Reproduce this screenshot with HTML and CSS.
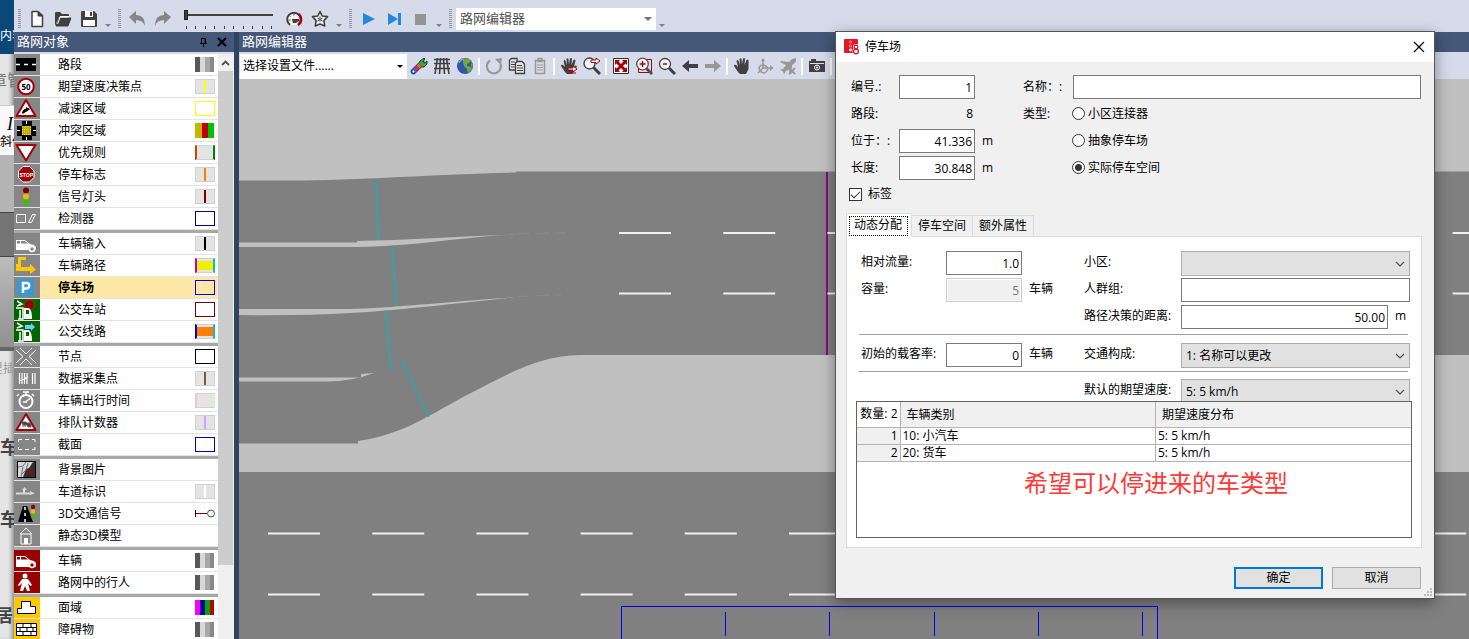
FILE: index.html
```html
<!DOCTYPE html>
<html lang="zh-CN">
<head>
  <meta charset="UTF-8">
  <title>路网编辑器</title>
  <link rel="stylesheet" href="styles.css">
</head>
<body>
  <div class="desktop">
    <aside class="behind" aria-hidden="true">
      <div class="behind-blue">内容</div>
      <div class="behind-head">章管</div>
      <div class="behind-tool"><i>I</i><span>斜体</span></div>
      <div class="behind-grey"></div>
      <div class="behind-dark"></div>
      <div class="behind-fade"></div>
      <div class="behind-hint">里插</div>
      <div class="behind-page"><b>车</b><b>车</b><b>居</b></div>
    </aside>

    <div class="app">
      <header class="toolbar">
        <span class="grip"></span>
        <button class="tool" aria-label="新建"><svg width="18" height="18" viewBox="0 0 18 18"><path d="M4 1.500h6l4.500 4v11H4z" fill="#fff" stroke="#404040" stroke-width="1.500" stroke-linejoin="round"/><path d="M10 1.500v4.500h4.500" fill="#404040" stroke="#404040"/></svg></button>
        <button class="tool" aria-label="打开"><svg width="18" height="18" viewBox="0 0 18 18"><path d="M1 16V3q0-1 1-1h4l2 2h6q1 0 1 1v2H5z" fill="#404040"/><path d="M5 8h12l-3 8H2z" fill="#404040" stroke="#404040"/><path d="M3 14L6 6h9v1.500H6.500L4 14z" fill="#fff"/></svg></button>
        <button class="tool" aria-label="保存"><svg width="18" height="18" viewBox="0 0 18 18"><path d="M2 1h12l3 3v12q0 1-1 1H2q-1 0-1-1V2q0-1 1-1z" fill="#404040"/><path d="M5 1h8v6H5zM3 10h12v6H3z" fill="#fff"/><path d="M10 2h2v4h-2z" fill="#404040"/></svg></button>
        <span class="more"></span>
        <span class="grip"></span>
        <button class="tool" aria-label="撤销"><svg width="18" height="18" viewBox="0 0 18 18"><path d="M1 7l7-6v4q9 0 9 11-2-6-9-6v4z" fill="#868686"/></svg></button>
        <button class="tool" aria-label="重做"><svg width="18" height="18" viewBox="0 0 18 18"><path d="M17 7l-7-6v4Q1 5 1 16q2-6 9-6v4z" fill="#868686"/></svg></button>
        <div class="speed">
          <input type="range" min="0" max="10" value="0" aria-label="仿真速度">
          <div class="ticks"><i></i><i></i><i></i><i></i><i></i><i></i><i></i><i></i><i></i><i></i></div>
        </div>
        <button class="tool" aria-label="最大速度"><svg width="18" height="18" viewBox="0 0 18 18"><path d="M5 15A6.800 6.800 0 1 1 13 15" fill="#f4f4f4" stroke="#404040" stroke-width="2"/><path d="M13.500 4A6.800 6.800 0 0 1 13 15" fill="none" stroke="#a80008" stroke-width="2.500"/><path d="M7 9h7v2l-3 2H8z" fill="#404040"/><path d="M4.500 5.500l1 1M9 3.500v2M3.500 10h2" stroke="#404040"/></svg></button>
        <button class="tool" aria-label="快速模式"><svg width="18" height="18" viewBox="0 0 18 18"><path d="M9 1.500l2.200 4.500 5.300.6-3.600 4 .8 5.400L9 14l-4.700 2 .8-5.400-3.600-4L6.800 6z" fill="#f4f4f4" stroke="#404040" stroke-width="1.600" stroke-linejoin="round"/><path d="M9 6.500v5M6.500 8l5 3M11.500 8l-5 3" fill="none" stroke="#505050"/></svg></button>
        <span class="more"></span>
        <span class="grip"></span>
        <button class="tool" aria-label="运行"><svg width="18" height="18" viewBox="0 0 18 18"><path d="M4 3l12 6-12 6z" fill="#2387dc"/></svg></button>
        <button class="tool" aria-label="单步"><svg width="18" height="18" viewBox="0 0 18 18"><path d="M3 3l10 6-10 6zM13 3h3v12h-3z" fill="#2387dc"/></svg></button>
        <button class="tool" aria-label="停止"><svg width="18" height="18" viewBox="0 0 18 18"><path d="M4 4h11v11H4z" fill="#949494"/></svg></button>
        <span class="more"></span>
        <span class="grip"></span>
        <div class="pick view-pick">
          <select aria-label="视图"><option>路网编辑器</option></select>
          <svg width="8" height="4" viewBox="0 0 8 4"><path d="M0 0h8L4 4z" fill="#707070"/></svg>
        </div>
        <span class="more"></span>
      </header>

      <div class="workspace">
        <section class="objects">
          <div class="panel-title">
            <h2>路网对象</h2>
            <button class="title-button" aria-label="固定"><svg width="10" height="10" viewBox="0 0 10 10"><path d="M2.500 6V1.500h4V6M6 2v4M1 6.500h7M4.500 7v3" fill="none" stroke="#000"/></svg></button>
            <button class="title-button" aria-label="关闭"><svg width="10" height="10" viewBox="0 0 10 10"><path d="M1 1l8 8M9 1L1 9" stroke="#000" stroke-width="2.200"/></svg></button>
          </div>
          <div class="object-body">
            <div class="object-list">
              <ul>
                <li><span class="icon"><svg viewBox="0 0 26 21"><path d="M2 4h20v13H2z" fill="#000"/><path d="M2 10.500h4m4 0h4m4 0h4" stroke="#fff" stroke-width="1.500"/></svg></span><span class="name">路段</span><span class="swatch greys"></span></li>
                <li><span class="icon"><svg viewBox="0 0 26 21"><circle cx="12" cy="10.500" r="7.800" fill="#fff" stroke="#a00008" stroke-width="2"/><text class="sign-text" x="12" y="14" text-anchor="middle">50</text></svg></span><span class="name">期望速度决策点</span><span class="swatch line yellow"></span></li>
                <li><span class="icon"><svg viewBox="0 0 26 21"><path d="M12 2L21.500 18h-19z" fill="#fff" stroke="#a00008" stroke-width="2" stroke-linejoin="round"/><path d="M8 15.500q0-4 4-5V9l4 2-3 2.500q-2 0-3 2z" fill="#000"/></svg></span><span class="name">减速区域</span><span class="swatch frame yellow"></span></li>
                <li><span class="icon"><svg viewBox="0 0 26 21"><path d="M8 1h10v5h4v10h-4v4H8v-4H3V6h5z" fill="#000"/><path d="M8 6h9v9H8z" fill="#b8a800"/><path d="M8 7h9M8 9.500h9M8 12h9M8 14.500h9" stroke="#ffe800" stroke-dasharray="1 1"/><path d="M3 10.500h3m13 0h3M12.500 1v3m0 13v3" stroke="#fff"/></svg></span><span class="name">冲突区域</span><span class="swatch conflict"></span></li>
                <li><span class="icon"><svg viewBox="0 0 26 21"><path d="M2.500 3h19L12 18.500z" fill="#fff" stroke="#a00008" stroke-width="2" stroke-linejoin="round"/></svg></span><span class="name">优先规则</span><span class="swatch edges priority"></span></li>
                <li><span class="icon"><svg viewBox="0 0 26 21"><path d="M9 2.500h6.500l4.500 4.500v6.500L15.500 18H9l-4.500-4.500V7z" fill="#a00008" stroke="#fff"/><text class="stop-text" x="12.300" y="12.500" text-anchor="middle">STOP</text></svg></span><span class="name">停车标志</span><span class="swatch line orange"></span></li>
                <li><span class="icon"><svg viewBox="0 0 26 21"><circle cx="12" cy="4.500" r="3" fill="#780000"/><circle cx="12" cy="10.500" r="3" fill="#f8b800"/><circle cx="12" cy="16.500" r="3" fill="#30c800"/></svg></span><span class="name">信号灯头</span><span class="swatch line maroon"></span></li>
                <li><span class="icon"><svg viewBox="0 0 26 21"><path d="M2.500 6.500h9v8h-9zM14.500 14.500l4-8h3l-4 8z" fill="none" stroke="#fff"/></svg></span><span class="name">检测器</span><span class="swatch frame navy"></span></li>
              </ul>
              <ul>
                <li><span class="icon"><svg viewBox="0 0 26 21"><path d="M2 7h9l5 4 4 1 2 2v3H2z" fill="#fff"/><path d="M3 10.500V8h3v2.500m1 0V8h4l3 2.500z" fill="#868686"/><circle cx="18" cy="16" r="3.200" fill="#868686"/><circle cx="18" cy="16" r="2.500" fill="#868686" stroke="#fff" stroke-width="1.500"/></svg></span><span class="name">车辆输入</span><span class="swatch line black"></span></li>
                <li><span class="icon"><svg viewBox="0 0 26 21"><path d="M4 2h8v3H7v7h9V9l6 5.500L16 19v-3H2V9h2z" fill="#ffc800"/></svg></span><span class="name">车辆路径</span><span class="swatch edges route"></span></li>
                <li class="selected"><span class="icon"><svg viewBox="0 0 26 21"><path d="M3 2h17v17H3z" fill="#3898d0"/><path d="M9 16V6h3.500a2.500 2.500 0 0 1 0 5.500H9" fill="none" stroke="#fff" stroke-width="2.500"/></svg></span><span class="name">停车场</span><span class="swatch frame blue"></span></li>
                <li><span class="icon green"><svg viewBox="0 0 26 21"><circle cx="15.500" cy="6" r="5" fill="#980000" stroke="#c04830" stroke-width=".5"/><path d="M3 2l5 3-5 2M2 9h7v11H4M6 11v9" fill="none" stroke="#fff" stroke-width="1.500"/><path d="M10 9h5q3 2 3 11h-8z" fill="#fff"/><path d="M12 11h3v4h-3z" fill="#006400"/></svg></span><span class="name">公交车站</span><span class="swatch frame maroon"></span></li>
                <li><span class="icon green"><svg viewBox="0 0 26 21"><path d="M3 2l5 3-5 2M2 9h7v11H4M6 11v9" fill="none" stroke="#fff" stroke-width="1.500"/><path d="M10 9h5q3 2 3 11h-8z" fill="#fff"/><path d="M12 11h3v4h-3z" fill="#006400"/><path d="M11 4h6V2l4 4-4 4V8h-6z" fill="#70ccff"/></svg></span><span class="name">公交线路</span><span class="swatch edges transit"></span></li>
              </ul>
              <ul>
                <li><span class="icon"><svg viewBox="0 0 26 21"><path d="M2 4l7 6.500L2 17M22 4l-7 6.500 7 6.500M6 2l6 6 6-6M6 19l6-6 6 6" fill="none" stroke="#fff"/></svg></span><span class="name">节点</span><span class="swatch frame black"></span></li>
                <li><span class="icon"><svg viewBox="0 0 26 21"><path d="M5.500 5v11M8 5v11M10.500 5v11M13 5v11M18.500 5v11M21 5v11M5 13l9-4" stroke="#fff" stroke-width="1.200"/></svg></span><span class="name">数据采集点</span><span class="swatch line brown"></span></li>
                <li><span class="icon"><svg viewBox="0 0 26 21"><circle cx="12" cy="11.500" r="6.500" fill="none" stroke="#fff" stroke-width="2"/><path d="M9 2h6M12 2v3M5 4L3 6M18 4l2 2M12 11.500l4-3M9 12h4" stroke="#fff" stroke-width="1.500"/></svg></span><span class="name">车辆出行时间</span><span class="swatch edges travel"></span></li>
                <li><span class="icon"><svg viewBox="0 0 26 21"><path d="M12 2L21.500 18h-19z" fill="#fff" stroke="#a00008" stroke-width="2" stroke-linejoin="round"/><path d="M8 10h4l1 1h3l1 2v2h-3l-1-2H9zM8 14h4" fill="#404040" stroke="#606060"/></svg></span><span class="name">排队计数器</span><span class="swatch line violet"></span></li>
                <li><span class="icon"><svg viewBox="0 0 26 21"><path d="M4.500 8V5.500H8M11 5.500h4M18 5.500h3V8M21 13v2.500h-3M15 15.500h-4M8 15.500H4.500V13" fill="none" stroke="#fff"/></svg></span><span class="name">截面</span><span class="swatch frame midblue"></span></li>
              </ul>
              <ul>
                <li><span class="icon"><svg viewBox="0 0 26 21"><path d="M3.500 2.500h18v16h-18z" fill="#303030" stroke="#000"/><path d="M4 3h15l-4 6-3 1-3 8H4z" fill="#d8d8d8"/><path d="M4 8l5-1 3-4M9 8L7 18M14 4l-2 7-5 5" fill="none" stroke="#707070"/><circle cx="17" cy="13" r="2" fill="#b00000"/></svg></span><span class="name">背景图片</span></li>
                <li><span class="icon"><svg viewBox="0 0 26 21"><path d="M2 12.500h15M10 12V8" stroke="#d8d8d8" stroke-width="2"/><path d="M8 9l2.500-3L13 9zM16 10l5 2.500-5 1.500z" fill="#d8d8d8"/></svg></span><span class="name">车道标识</span><span class="swatch pair"></span></li>
                <li><span class="icon"><svg viewBox="0 0 26 21"><path d="M9 3h4l6 16H4z" fill="#000"/><path d="M11 4v3m0 3v3m0 3v3" stroke="#fff" stroke-width="1.500"/><circle cx="19" cy="4" r="2.200" fill="#900000"/><circle cx="19" cy="8.500" r="2.200" fill="#f8b800"/><circle cx="19" cy="13" r="2.200" fill="#30c800"/></svg></span><span class="name">3D交通信号</span><svg class="signal" width="20" height="15" viewBox="0 0 20 15"><path d="M.5 4v7" stroke="#000080"/><path d="M1 7.500h11" stroke="#780000"/><circle cx="16" cy="7.500" r="3.500" fill="#fff" stroke="#108010"/></svg></li>
                <li><span class="icon"><svg viewBox="0 0 26 21"><path d="M7 19V9h10v10zM6 9l6-6 6 6" fill="none" stroke="#fff"/><path d="M10 13h4v6h-4z" fill="#fff"/></svg></span><span class="name">静态3D模型</span></li>
              </ul>
              <ul>
                <li><span class="icon red"><svg viewBox="0 0 26 21"><path d="M2 6h9l5 4 4 1 2 2v4H2z" fill="#fff"/><path d="M3 9.500V7h3v2.500m1 0V7h4l3 2.500z" fill="#980000"/><circle cx="18" cy="15" r="3.200" fill="#980000"/><circle cx="18" cy="15" r="2.500" fill="none" stroke="#fff" stroke-width="1.500"/></svg></span><span class="name">车辆</span><span class="swatch greys"></span></li>
                <li><span class="icon red"><svg viewBox="0 0 26 21"><circle cx="11" cy="4" r="2.500" fill="#fff"/><path d="M8 7h6l4 6-1.500 1L14 11l2 8h-3l-2-5-2 5H6l2-8-3 3-1-1z" fill="#fff"/></svg></span><span class="name">路网中的行人</span><span class="swatch greys"></span></li>
              </ul>
              <ul>
                <li><span class="icon gold"><svg viewBox="0 0 26 21"><path d="M3.500 16.500v-5h4v-7h9v5h5v7z" fill="#fff" stroke="#000"/></svg></span><span class="name">面域</span><span class="swatch area"></span></li>
                <li><span class="icon gold"><svg viewBox="0 0 26 21"><path d="M2.500 4.500h20v12h-20z" fill="#fff" stroke="#000"/><path d="M2.500 8.500h20m-20 4h20M9 4.500v4m8-4v4m-11 0v4m7-4v4m6-4v4m-10 0v4m8-4v4" stroke="#000"/></svg></span><span class="name">障碍物</span><span class="swatch greys"></span></li>
              </ul>
            </div>
            <div class="scrollbar">
              <button aria-label="向上滚动"><svg width="9" height="6" viewBox="0 0 9 6"><path d="M1 5l3.500-3.500L8 5" fill="none" stroke="#505050" stroke-width="1.800"/></svg></button>
              <div class="thumb"></div>
            </div>
          </div>
        </section>

        <main class="editor">
          <div class="panel-title"><h2>路网编辑器</h2></div>
          <div class="editor-tools">
            <div class="pick file-pick">
              <select aria-label="设置文件"><option>选择设置文件......</option></select>
              <svg width="6" height="3" viewBox="0 0 6 3"><path d="M0 0h6L3 3z" fill="#000"/></svg>
            </div>
            <button class="tool" aria-label="图形参数"><svg width="18" height="18" viewBox="0 0 18 18"><path d="M3.500 14.500L12 6" stroke="#303030" stroke-width="5.500" stroke-linecap="round"/><path d="M10 7V4l4-3 1 1-2 2.500L14.500 6 17 4v3l-3 3h-3z" fill="#38a838" stroke="#303030"/><path d="M3.500 14.500l2-2" stroke="#2868e0" stroke-width="4" stroke-linecap="round"/><path d="M5.500 12.500l2.500-2.500" stroke="#d02090" stroke-width="4"/><path d="M8 10l2-2" stroke="#e07020" stroke-width="4"/><path d="M10 8l2-2" stroke="#38a838" stroke-width="4"/><circle cx="3.500" cy="14.500" r="1" fill="#fff"/></svg></button>
            <button class="tool" aria-label="线框"><svg width="18" height="18" viewBox="0 0 18 18"><path d="M1 2.500h16M1 6.500h16M1 11.500h16M4.500 1L2 17M7.500 1L6.500 17M10.500 1l1 16M13.500 1L16 17" stroke="#404040" stroke-width="1.600"/></svg></button>
            <button class="tool" aria-label="背景地图"><svg width="18" height="18" viewBox="0 0 18 18"><circle cx="9" cy="9" r="8" fill="#3158a8"/><path d="M7 2l5-1 3 3-2 2-2 1v2l4 1 1 2-4 4-1-4-3-3-1-4zM15 5l2 4-2 1z" fill="#78a838"/><path d="M3 6q2-4 5-4" fill="none" stroke="#80a0d8" stroke-width="1.500"/></svg></button>
            <span class="sep"></span>
            <button class="tool" aria-label="刷新"><svg width="18" height="18" viewBox="0 0 18 18"><path d="M5 3.500A7 7 0 1 0 15.500 7" fill="none" stroke="#989898" stroke-width="2.200"/><path d="M10 2l7-1-1 7z" fill="#989898"/></svg></button>
            <button class="tool" aria-label="复制"><svg width="18" height="18" viewBox="0 0 18 18"><g fill="#e8e8ec" stroke="#404040" stroke-width="1.300"><path d="M1.500 3l2-1.500H9V13H1.500z"/><path d="M7.500 6l2-1.500H14L16.500 7v9.500h-9z"/></g><path d="M3 5h4M3 7.500h4M3 10h4M9 8.500h5M9 11h6M9 13.500h6" stroke="#404040"/></svg></button>
            <button class="tool" aria-label="粘贴"><svg width="18" height="18" viewBox="0 0 18 18"><path d="M4.500 3.500h9v13h-9zM7 1.500h4v3H7z" fill="none" stroke="#989898" stroke-width="1.500"/><path d="M6 8h6M6 10.500h6M6 13h6" stroke="#989898"/></svg></button>
            <span class="sep"></span>
            <button class="tool" aria-label="同步平移"><svg width="18" height="18" viewBox="0 0 18 18"><path d="M5 15L1 9q0-2 2-1l2 2-1.500-6q1-2 2 0L7 8l-.5-6q1.200-1.500 2 0L9 7.500l1-6q1.500-1 2 0L11.500 8l2-5q1.500-1 2 .5L14 10l1.500-1.500q2 0 1 2L12 17H7z" fill="#404040"/><path d="M8 11h5V9l4 3-4 3v-2H8zM9 16h7" fill="#fff" stroke="#a80008"/></svg></button>
            <button class="tool" aria-label="同步缩放"><svg width="18" height="18" viewBox="0 0 18 18"><path d="M10 10l7 7" stroke="#404040" stroke-width="3"/><circle cx="6.500" cy="6.500" r="5.500" fill="#f4f4f8" stroke="#404040" stroke-width="1.300"/><path d="M8 3h5V1l4 3-4 3V5.500H8z" fill="#fff" stroke="#a80008"/></svg></button>
            <span class="sep"></span>
            <button class="tool" aria-label="显示全部"><svg width="18" height="18" viewBox="0 0 18 18"><path d="M1.500 1.500h15v15h-15z" fill="#fff" stroke="#303030"/><path d="M3 3h5L6.500 4.500 9 7l2.500-2.500L10 3h5v5l-1.500-1.500L11 9l2.500 2.500L15 10v5h-5l1.500-1.500L9 11l-2.500 2.500L8 15H3v-5l1.500 1.500L7 9 4.500 6.500 3 8z" fill="#a80008"/></svg></button>
            <button class="tool" aria-label="放大"><svg width="18" height="18" viewBox="0 0 18 18"><path d="M5.500 2.500h11v13h-13V9" fill="none" stroke="#a80008"/><path d="M11 11l6 6" stroke="#505050" stroke-width="3"/><circle cx="7.500" cy="7" r="5.800" fill="#f8f8f8" stroke="#505050" stroke-width="1.300"/><path d="M4.500 7h6M7.500 4v6" stroke="#a80008" stroke-width="1.500"/></svg></button>
            <button class="tool" aria-label="缩小"><svg width="18" height="18" viewBox="0 0 18 18"><path d="M11 11l6 6" stroke="#404040" stroke-width="3"/><circle cx="7" cy="7" r="5.500" fill="#f8f8f8" stroke="#404040" stroke-width="1.300"/><path d="M5 7h4" stroke="#a80008" stroke-width="1.500"/></svg></button>
            <button class="tool" aria-label="上一视图"><svg width="18" height="18" viewBox="0 0 18 18"><path d="M1 9l7-6v4h9v4H8v4z" fill="#404040"/></svg></button>
            <button class="tool" aria-label="下一视图"><svg width="18" height="18" viewBox="0 0 18 18"><path d="M17 9l-7-6v4H1v4h9v4z" fill="#989898"/></svg></button>
            <span class="sep"></span>
            <button class="tool" aria-label="平移"><svg width="18" height="18" viewBox="0 0 18 18"><path d="M5 15L1 9q0-2 2-1l2 2-1.500-6q1-2 2 0L7 8l-.5-6q1.200-1.500 2 0L9 7.500l1-6q1.500-1 2 0L11.500 8l2-5q1.500-1 2 .5L15.500 12 13 17H7z" fill="#404040"/></svg></button>
            <button class="tool" aria-label="旋转"><svg width="18" height="18" viewBox="0 0 18 18"><path d="M7 2v9l-5 5M7 11h10" fill="none" stroke="#989898" stroke-width="1.600"/><path d="M5 4l2-3 2 3zM14 8l3.500 3-3.500 3z" fill="#989898"/><path d="M3 10q4-4 8 0 2 4-3 6-5-1-5-6" fill="none" stroke="#989898" stroke-width="1.500"/></svg></button>
            <button class="tool" aria-label="飞行"><svg width="18" height="18" viewBox="0 0 18 18"><path d="M17 1l-4 1-3 3-8-1-1 1 6 3-3 4-3 .5 3 2 1 3 1.500-3 3-2 2 5 1-1 .5-8 4-4z" fill="#989898"/><path d="M10 11l6 6M16 11l-6 6" stroke="#989898" stroke-width="1.800"/></svg></button>
            <span class="sep"></span>
            <button class="tool" aria-label="截图"><svg width="18" height="18" viewBox="0 0 18 18"><path d="M1 4h2V2h5v2h9v11H1z" fill="#404040"/><path d="M2 6.500h14" stroke="#e0e0e0"/><circle cx="9" cy="10.500" r="2.500" fill="#404040" stroke="#fff"/><circle cx="9" cy="10.500" r="1" fill="#fff"/></svg></button>
            <span class="sep"></span>
          </div>
          <svg class="network" viewBox="239 79 1230 560" preserveAspectRatio="xMinYMin slice">
            <rect x="239" y="79" width="1230" height="560" fill="#c0c0c0"/>
            <!-- upper road with the merging lanes -->
            <path d="M239 180.500H300C380 179 440 174 516 172.500V171.500H1469V355H580C535 356 505 376 463 397C425 418 400 435 358 441V443.500H239z" fill="#808080"/>
            <path d="M239 242.500H357V241C410 240 460 236 516 234.500C460 237 420 246 357 247H239z" fill="#c0c0c0"/>
            <path d="M239 309H340C380 309 420 304 516 297C440 305 400 310 350 313Q300 316 239 315z" fill="#c0c0c0"/>
            <path d="M239 377.500H361V374L374 373Q350 382 325 381.500H239z" fill="#c0c0c0"/>
            <path d="M516 234q20-1 50-1M516 297q20-2 45-2" fill="none" stroke="#8c8c8c" stroke-dasharray="14 6"/>
            <path d="M376 179L378.500 240M392.500 245L396 306M385.500 310L391 371M402.500 361L429 417" stroke="#10b4b4" stroke-width="1.300"/>
            <path d="M827 172V355" stroke="#900090" stroke-width="2"/>
            <path d="M619 233H1469M619 293.500H1469" stroke="#f0f0f0" stroke-width="2" stroke-dasharray="52 52.200"/>
            <!-- lower road -->
            <rect x="239" y="472" width="1230" height="167" fill="#808080"/>
            <path d="M268 533.500H1469M268 594.500H1469" stroke="#f0f0f0" stroke-width="2" stroke-dasharray="52 52.200"/>
            <path d="M621.500 639V606.500H1157.500V639M725.500 612V636M829.500 612V636M934.500 612V636M1038.500 612V636M1142.500 612V636" fill="none" stroke="#0000f0"/>
          </svg>
        </main>
      </div>
    </div>

    <form class="dialog" role="dialog" aria-labelledby="dialogTitle">
      <div class="dialog-title">
        <svg width="16" height="16" viewBox="0 0 16 16"><rect width="14" height="14" rx="1" fill="#e01828"/><circle cx="6.500" cy="3" r="1.200" fill="none" stroke="#ffb0b0" stroke-width=".7"/><circle cx="6.500" cy="7" r="1.200" fill="none" stroke="#ffb0b0" stroke-width=".7"/><circle cx="6.500" cy="11" r="1.400" fill="#fff"/><g fill="#fff" stroke="#fff" stroke-width="3"><circle cx="12" cy="8" r="1.500"/><circle cx="12" cy="12.500" r="2"/></g><g fill="#fff" stroke="#d01020" stroke-width="1.200"><circle cx="12" cy="8" r="1.800"/><circle cx="12" cy="12.500" r="2.400"/></g></svg>
        <h1 id="dialogTitle">停车场</h1>
        <button type="button" class="close" aria-label="关闭"><svg width="12" height="12" viewBox="0 0 12 12"><path d="M1 1l10 10M11 1L1 11" stroke="#000" stroke-width="1.200"/></svg></button>
      </div>

      <div class="dialog-body">
        <div class="basics">
          <label for="no">编号.:</label>
          <input id="no" class="box num" type="text" value="1">
          <span></span>
          <label for="name">名称：:</label>
          <input id="name" class="box" type="text">

          <span>路段:</span>
          <output class="num plain">8</output>
          <span></span>
          <span>类型:</span>
          <label class="radio"><input type="radio" name="type">小区连接器</label>

          <label for="pos">位于：:</label>
          <input id="pos" class="box num" type="text" value="41.336">
          <span class="unit">m</span>
          <span></span>
          <label class="radio"><input type="radio" name="type">抽象停车场</label>

          <label for="len">长度:</label>
          <input id="len" class="box num" type="text" value="30.848">
          <span class="unit">m</span>
          <span></span>
          <label class="radio"><input type="radio" name="type" checked>实际停车空间</label>
        </div>
        <label class="check"><input type="checkbox" checked>标签</label>

        <div class="tabs" role="tablist">
          <button type="button" class="tab active" role="tab" aria-selected="true"><span>动态分配</span></button>
          <button type="button" class="tab" role="tab">停车空间</button>
          <button type="button" class="tab" role="tab">额外属性</button>
        </div>

        <div class="tab-panel">
          <div class="fields">
            <label for="attr">相对流量:</label>
            <input id="attr" class="box num" type="text" value="1.0">
            <span></span>
            <label for="zone">小区:</label>
            <div class="pick combo wide">
              <select id="zone"><option></option></select>
              <svg width="10" height="6" viewBox="0 0 10 6"><path d="M1 1l4 4 4-4" fill="none" stroke="#505050" stroke-width="1.200"/></svg>
            </div>

            <label for="cap">容量:</label>
            <input id="cap" class="box num" type="text" value="5" disabled>
            <span class="unit">车辆</span>
            <label for="group">人群组:</label>
            <input id="group" class="box wide" type="text">

            <span></span>
            <span></span>
            <span></span>
            <label for="dist">路径决策的距离:</label>
            <input id="dist" class="box num" type="text" value="50.00">
            <span class="unit">m</span>
          </div>
          <hr>
          <div class="fields">
            <label for="occ">初始的载客率:</label>
            <input id="occ" class="box num" type="text" value="0">
            <span class="unit">车辆</span>
            <label for="comp">交通构成:</label>
            <div class="pick combo wide">
              <select id="comp"><option>1: 名称可以更改</option></select>
              <svg width="10" height="6" viewBox="0 0 10 6"><path d="M1 1l4 4 4-4" fill="none" stroke="#505050" stroke-width="1.200"/></svg>
            </div>
          </div>
          <hr>
          <div class="fields clipped">
            <span></span>
            <span></span>
            <span></span>
            <label for="speed">默认的期望速度:</label>
            <div class="pick combo wide">
              <select id="speed"><option>5: 5 km/h</option></select>
              <svg width="10" height="6" viewBox="0 0 10 6"><path d="M1 1l4 4 4-4" fill="none" stroke="#505050" stroke-width="1.200"/></svg>
            </div>
          </div>
          <div class="grid-box">
            <table>
              <thead>
                <tr><th class="count">数量: 2</th><th>车辆类别</th><th>期望速度分布</th></tr>
              </thead>
              <tbody>
                <tr><th>1</th><td>10: 小汽车</td><td>5: 5 km/h</td></tr>
                <tr><th>2</th><td>20: 货车</td><td>5: 5 km/h</td></tr>
              </tbody>
            </table>
            <p class="note">希望可以停进来的车类型</p>
          </div>
        </div>

        <div class="actions">
          <button type="button" class="push default">确定</button>
          <button type="button" class="push">取消</button>
        </div>
      </div>
      <svg class="resize" width="8" height="8" viewBox="0 0 8 8"><path d="M6 0h2v2H6zM3 3h2v2H3zM6 3h2v2H6zM0 6h2v2H0zM3 6h2v2H3zM6 6h2v2H6z" fill="#bcbcbc"/></svg>
    </form>
  </div>
</body>
</html>
```
FILE: styles.css
```css
* {
  box-sizing: border-box;
}
body {
  margin: 0;
  font: 12px/16px "Open Sans", "Noto Sans CJK SC", sans-serif;
  color: #000;
  overflow: hidden;
}
button, input, select {
  font: inherit;
  color: inherit;
  margin: 0;
}
button {
  padding: 0;
  border: 0;
  background: none;
}
h1, h2, p, ul {
  margin: 0;
  padding: 0;
  font-size: inherit;
  font-weight: normal;
}
svg {
  display: block;
}
.desktop {
  position: relative;
  display: flex;
  height: 100vh;
}

/* window behind the application */
.behind {
  flex: 0 0 14px;
  display: flex;
  flex-direction: column;
  overflow: hidden;
  white-space: nowrap;
  background: #e4e4e4;
  box-shadow: inset -4px 0 4px -2px #888;
}
.behind-blue {
  height: 54px;
  padding-top: 28px;
  background: #0b4878;
  color: #fff;
}
.behind-head {
  height: 52px;
  padding-top: 18px;
  text-indent: -9px;
  border-bottom: 1px solid #ccc;
  font-size: 16px;
  color: #777;
}
.behind-tool {
  height: 49px;
  padding-top: 8px;
  background: #f8f8f8;
}
.behind-tool i {
  display: block;
  padding-left: 7px;
  font: italic 18px/20px "Liberation Serif", serif;
}
.behind-grey {
  height: 57px;
  background: #b4b4b4;
}
.behind-dark {
  height: 45px;
  background: #747474;
  border: 1px solid #444;
  border-width: 1px 0;
}
.behind-fade {
  height: 94px;
  background: linear-gradient(#bcbcbc, #909090);
  border-bottom: 4px solid #666;
}
.behind-hint {
  height: 31px;
  padding-top: 10px;
  text-indent: -9px;
  color: #999;
}
.behind-page {
  flex: 1;
  display: flex;
  flex-direction: column;
  gap: 48px;
  padding-top: 53px;
  font-size: 18px;
  line-height: 24px;
  color: #444;
}
.behind-page b:last-child {
  margin-top: 24px;
  text-indent: -5px;
}

/* application */
.app {
  flex: 1;
  min-width: 0;
  display: flex;
  flex-direction: column;
  background: #d5dbe9;
}
.toolbar {
  flex: 0 0 32px;
  display: flex;
  align-items: center;
  padding-top: 6px;
}
.toolbar .tool {
  flex: 0 0 26px;
}
.tool {
  display: grid;
  place-items: center;
}
.grip {
  flex: 0 0 10px;
  height: 20px;
  background: repeating-linear-gradient(#9098a4 0 1px, transparent 1px 2px) center / 3px 20px no-repeat;
}
.more {
  flex: 0 0 12px;
  align-self: flex-end;
  height: 9px;
}
.more::before {
  content: "";
  display: block;
  width: 0;
  margin: 1px auto 0;
  border: 3px solid transparent;
  border-bottom-width: 0;
  border-top-color: #808080;
}
.speed {
  flex: 0 0 105px;
  padding: 0 8px;
}
.speed input {
  display: block;
  width: 89px;
  height: 12px;
  appearance: none;
  background: linear-gradient(#404040, #404040) center / 100% 2px no-repeat;
}
.speed input::-webkit-slider-thumb {
  appearance: none;
  width: 4px;
  height: 10px;
  background: #304048;
  border: 1px solid #202020;
}
.ticks {
  display: flex;
  justify-content: space-between;
  padding: 5px 1px 0 2px;
}
.ticks i {
  width: 1px;
  height: 3px;
  background: #404040;
}
.pick {
  position: relative;
  display: flex;
  align-items: center;
  background: #fff;
}
.pick select {
  width: 100%;
  height: 100%;
  padding: 0 4px;
  border: 0;
  outline: 0;
  appearance: none;
  background: none;
}
.pick svg {
  position: absolute;
  right: 4px;
  pointer-events: none;
}
.view-pick {
  flex: 0 0 200px;
  height: 22px;
  margin-left: 1px;
  font-size: 13px;
  color: #505050;
}
.view-pick select {
  padding-bottom: 2px;
}
.workspace {
  flex: 1;
  min-height: 0;
  display: flex;
}
.objects {
  flex: 0 0 225px;
  display: flex;
  flex-direction: column;
  border-right: 5px solid #30435f;
}
.panel-title {
  flex: 0 0 20px;
  display: flex;
  align-items: center;
  background: #45587a;
  color: #fff;
}
.panel-title h2 {
  flex: 1;
  padding: 0 3px 2px;
  font-size: 13px;
  line-height: 18px;
}
.title-button {
  width: 18px;
  display: grid;
  place-items: center;
}
.objects .panel-title {
  padding-right: 3px;
}
.object-body {
  flex: 1;
  min-height: 0;
  display: flex;
  margin-top: 2px;
}
.object-list {
  flex: 1;
  overflow: hidden;
  background: #fff;
}
.object-list ul {
  list-style: none;
  border-bottom: 3px solid #a8a8a8;
}
.object-list li {
  display: flex;
  align-items: center;
  height: 22px;
  border-bottom: 1px solid #e4e4e4;
}
.object-list li.selected {
  background: #ffe8a6;
  font-weight: bold;
}
.icon {
  flex: 0 0 26px;
  height: 21px;
  background: #868686;
}
.icon.green {
  background: #006400;
}
.icon.red {
  background: #980000;
}
.icon.gold {
  background: #ffc800;
}
.sign-text {
  font: bold 8px "Open Sans", sans-serif;
}
.stop-text {
  font: bold 5px "Liberation Sans", sans-serif;
  fill: #fff;
}
.name {
  flex: 1;
  padding-left: 18px;
}
.swatch {
  width: 20px;
  height: 15px;
  margin-right: 3px;
}
.signal {
  margin-right: 3px;
}
.swatch.greys {
  background: linear-gradient(90deg, #585858 0 5px, #d8d8d8 5px 10px, #a8a8a8 10px 15px, #888 15px 19px, transparent 19px);
}
.swatch.conflict {
  background: linear-gradient(90deg, #c0b800 0 7px, #c00000 7px 13px, #00c000 13px 19px, transparent 19px);
}
.swatch.area {
  background: linear-gradient(90deg, #f0e 0 5px, #0000a8 5px 10px, #00a800 10px 15px, #c00000 15px 19px, transparent 19px);
}
.swatch.line {
  background: linear-gradient(currentColor, currentColor) center / 2px 100% no-repeat #e4e4e4;
  box-shadow: inset 0 0 0 1px #d0d0d0;
}
.swatch.frame {
  border: 1px solid currentColor;
  background: #fff;
}
.selected .swatch.frame {
  background: none;
}
.swatch.edges {
  background: #e4e4e4;
  border: 2px solid #d0d0d0;
  border-width: 1px 2px;
}
.swatch.priority {
  border-left-color: #c04800;
  border-right-color: #008000;
}
.swatch.route {
  border-color: #d0d0d0 #00c0c0 #d0d0d0 #c000c0;
  background: linear-gradient(#e4e4e4 0 2px, #f0f000 2px 11px, #e4e4e4 11px);
}
.swatch.transit {
  border-color: #d0d0d0 #00c0c0 #d0d0d0 #0000f0;
  background: linear-gradient(#e4e4e4 0 2px, #ff8000 2px 11px, #e4e4e4 11px);
}
.swatch.travel {
  border-left-color: #ffc0c0;
  border-right-color: #c0ffc0;
}
.swatch.pair {
  border: 1px solid #d0d0d0;
  background: linear-gradient(90deg, #e4e4e4 0 8px, #fff 8px 10px, #e4e4e4 10px);
}
.yellow { color: #ff0; }
.orange { color: #ff8000; }
.maroon { color: #780000; }
.navy { color: #000080; }
.black { color: #000; }
.blue { color: #0000f0; }
.midblue { color: #0000b8; }
.brown { color: #805840; }
.violet { color: #d0a0ff; }

.scrollbar {
  flex: 0 0 16px;
  display: flex;
  flex-direction: column;
  background: #f0f0f0;
  border-right: 1px solid #f0f0f0;
}
.scrollbar button {
  height: 17px;
  display: grid;
  place-items: center;
}
.scrollbar .thumb {
  height: 87%;
  max-height: 494px;
  background: #cdcdcd;
}

/* network editor */
.editor {
  flex: 1;
  min-width: 0;
  display: flex;
  flex-direction: column;
}
.editor-tools {
  flex: 0 0 27px;
  display: flex;
  align-items: center;
  padding: 1px 0 0 1px;
}
.editor-tools .tool {
  flex: 0 0 23px;
}
.file-pick {
  flex: 0 0 167px;
  height: 25px;
}
.file-pick select {
  padding: 0 3px;
}
.sep {
  flex: 0 0 6px;
  height: 17px;
  background: linear-gradient(#fff, #fff) center / 2px 100% no-repeat;
}
.network {
  flex: 1;
  width: 100%;
  min-height: 0;
}

/* parking lot dialog */
.dialog {
  position: absolute;
  left: 835px;
  top: 31px;
  width: 600px;
  border: 1px solid #555;
  background: #f0f0f0;
  box-shadow: 0 4px 14px rgba(0, 0, 0, .4);
}
.dialog-title {
  display: flex;
  align-items: center;
  gap: 5px;
  height: 30px;
  padding: 0 9px 0 8px;
  background: #fff;
}
.dialog-title h1 {
  flex: 1;
}
.dialog-body {
  padding: 11px 12px 9px 10px;
}
.basics {
  display: grid;
  grid-template-columns: 48px 76px 48px 50px 1fr;
  grid-auto-rows: 27px;
  align-items: center;
  padding: 0 1px 0 5px;
}
.box {
  width: 100%;
  height: 24px;
  padding: 1px 2px 0;
  border: 1px solid #7a7a7a;
  background: #fff;
}
.box:disabled {
  border-color: #ccc;
  background: #f0f0f0;
  box-shadow: inset 0 0 0 1px #fff;
  color: #787878;
}
.num {
  text-align: right;
}
.plain {
  padding-right: 2px;
}
.unit {
  padding-left: 7px;
}
.radio, .check {
  display: flex;
  align-items: center;
  gap: 3px;
}
.radio input, .check input {
  width: 13px;
  height: 13px;
  border: 1px solid #333;
  background: #fff;
  appearance: none;
}
.radio input {
  border-radius: 50%;
}
.radio input:checked {
  background: radial-gradient(#333 0 3px, #fff 4px);
}
.radio {
  margin-left: -1px;
}
.check {
  height: 26px;
  padding-left: 3px;
  gap: 6px;
}
.check input:checked::after {
  content: "";
  display: block;
  width: 8px;
  height: 4px;
  margin: 2px 1px;
  border: 1px solid #333;
  border-width: 0 0 1px 1px;
  transform: rotate(-45deg);
}
.tabs {
  display: flex;
  align-items: flex-end;
  margin-top: 6px;
}
.tab {
  height: 21px;
  padding: 0 6px;
  border: 1px solid #dcdcdc;
  border-width: 1px 1px 0 0;
}
.tab.active {
  height: 24px;
  margin-bottom: -1px;
  padding: 2px 3px 3px 2px;
  border-left-width: 1px;
  background: #fff;
  z-index: 1;
}
.tab.active span {
  display: block;
  padding: 0 5px 2px 4px;
  border: 1px dotted #000;
  line-height: 16px;
}
.tab-panel {
  padding: 11px 9px 9px;
  border: 1px solid #dcdcdc;
  background: #fff;
}
.fields {
  display: grid;
  grid-template-columns: 85px 76px 62px 97px 207px 22px;
  grid-auto-rows: 27px;
  align-items: center;
  padding-left: 5px;
}
.fields .box {
  margin-top: 2px;
}
.wide {
  grid-column: span 2;
}
.fields .combo {
  height: 25px;
  margin-top: 4px;
  border: 1px solid #adadad;
  background: #e1e1e1;
}
.tab-panel hr {
  height: 1px;
  margin: 5px 4px 5px 3px;
  border: 0;
  background: #a0a0a0;
}
.tab-panel .fields + hr + .fields + hr {
  margin-top: 4px;
}
.clipped {
  grid-auto-rows: 25px;
  height: 24px;
  overflow: hidden;
}
.grid-box {
  position: relative;
  height: 137px;
  border: 1px solid #646464;
}
.grid-box table {
  width: 100%;
  border-collapse: collapse;
  table-layout: fixed;
}
.grid-box th, .grid-box td {
  height: 17px;
  padding: 0 2px;
  border: 1px solid #b4b4b4;
  border-width: 0 0 1px 1px;
  line-height: 16px;
  text-align: left;
  font-weight: normal;
}
.grid-box th:first-child {
  width: 43px;
  border-left: 0;
  text-align: right;
  white-space: nowrap;
}
.grid-box th {
  background: #f0f0f0;
}
.grid-box thead th {
  height: 25px;
  padding: 1px 6px 0;
}
.grid-box thead .count {
  padding: 0 2px;
  background: #fff;
}
.note {
  position: absolute;
  left: 167px;
  top: 64px;
  font-size: 24px;
  line-height: 34px;
  color: #ff3838;
  white-space: nowrap;
}
.actions {
  display: flex;
  justify-content: flex-end;
  gap: 9px;
  margin-top: 19px;
  padding-right: 1px;
}
.push {
  width: 89px;
  height: 22px;
  border: 1px solid #adadad;
  background: #e1e1e1;
}
.push.default {
  border: 2px solid #0078d7;
}
.resize {
  position: absolute;
  right: 2px;
  bottom: 2px;
}
```
